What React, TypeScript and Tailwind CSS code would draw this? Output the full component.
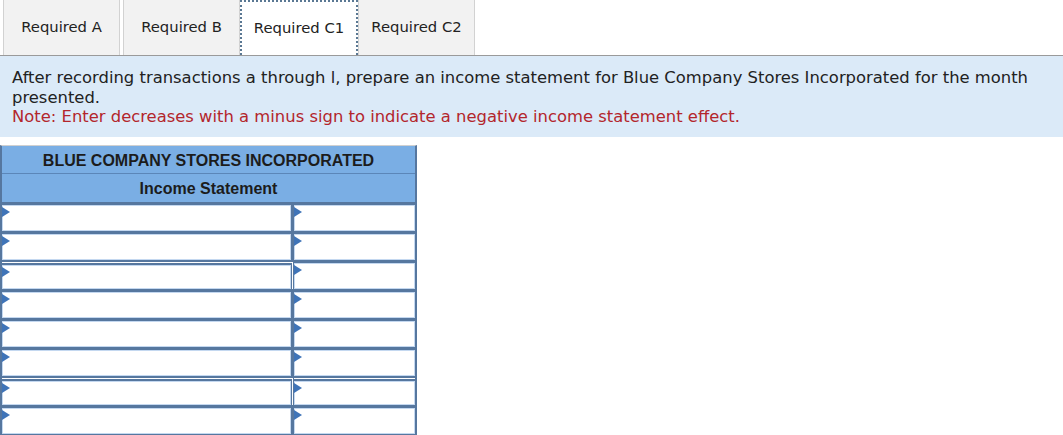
import React from "react";

const tabs = ["Required A", "Required B", "Required C1", "Required C2"];

type RowStyle = {
  leftTop: "single" | "double";
  rightTop: "single" | "double" | "black";
};

const rows: RowStyle[] = [
  { leftTop: "single", rightTop: "single" },
  { leftTop: "single", rightTop: "single" },
  { leftTop: "double", rightTop: "black" },
  { leftTop: "single", rightTop: "single" },
  { leftTop: "single", rightTop: "single" },
  { leftTop: "single", rightTop: "single" },
  { leftTop: "double", rightTop: "double" },
  { leftTop: "single", rightTop: "black" },
];

const Arrow = () => (
  <span className="absolute left-0 top-[2px] h-0 w-0 border-y-[5px] border-l-[8px] border-y-transparent border-l-[#3f74b8]" />
);

const topBorder = (kind: string) => {
  if (kind === "double") return "border-t-[5px] border-double border-[#56779f]";
  if (kind === "black") return "border-t-[3px] border-[#56779f] shadow-[inset_0_2px_0_#111]";
  return "border-t-[3px] border-[#56779f]";
};

const Row = ({ r }: { r: RowStyle }) => (
  <div className="flex h-[29px]">
    <div className={`relative w-[292px] border-r-[3px] border-r-[#56779f] ${topBorder(r.leftTop)}`}>
      <div className="h-full border border-[#c4d8f0] bg-white" />
      <Arrow />
    </div>
    <div className={`relative flex-1 ${topBorder(r.rightTop)}`}>
      <div className="h-full border border-[#c4d8f0] bg-white" />
      <Arrow />
    </div>
  </div>
);

export default function App() {
  return (
    <div className="h-[435px] w-[1063px] overflow-hidden bg-white" style={{ fontFamily: '"DejaVu Sans", Verdana, sans-serif' }}>
      <div className="flex h-[56px] items-stretch border-b border-[#9a9a9a] pl-[3px]">
        {tabs.map((t, i) =>
          i === 2 ? (
            <div key={t} className="flex w-[118px] items-center justify-center border-2 border-b-0 border-dotted border-[#5a7893] bg-white text-[14.8px] text-[#222]">
              {t}
            </div>
          ) : (
            <div
              key={t}
              className={`flex w-[117px] items-center justify-center border-x border-[#d2d2d2] bg-[#f2f2f2] text-[14.8px] text-[#222] ${i === 1 ? "ml-[3px]" : ""}`}
            >
              {t}
            </div>
          )
        )}
      </div>

      <div className="bg-[#dbeaf8] px-[12px] pb-[10px] pt-[12px] text-[16.4px] leading-[19.5px] text-[#222]">
        <p>
          After recording transactions a through l, prepare an income statement for Blue Company Stores Incorporated for the month
          presented.
        </p>
        <p className="text-[#b3262c]">Note: Enter decreases with a minus sign to indicate a negative income statement effect.</p>
      </div>

      <div className="mt-[8px] w-[417px] border-l-[2px] border-r-[2px] border-[#56779f] border-t border-t-[#d0d0d0]" style={{ fontFamily: '"Liberation Sans", Arial, sans-serif' }}>
        <div className="flex h-[28px] items-center justify-center border-b border-[#5b86b8] bg-[#7aaee4] pt-[3px] text-[16px] font-bold text-[#1c1c1c]">
          BLUE COMPANY STORES INCORPORATED
        </div>
        <div className="flex h-[28px] items-center justify-center bg-[#7aaee4] pt-[3px] text-[16px] font-bold text-[#1c1c1c]">
          Income Statement
        </div>
        {rows.map((r, i) => (
          <Row key={i} r={r} />
        ))}
        <div className="h-[3px] bg-[#56779f]" />
      </div>
    </div>
  );
}
